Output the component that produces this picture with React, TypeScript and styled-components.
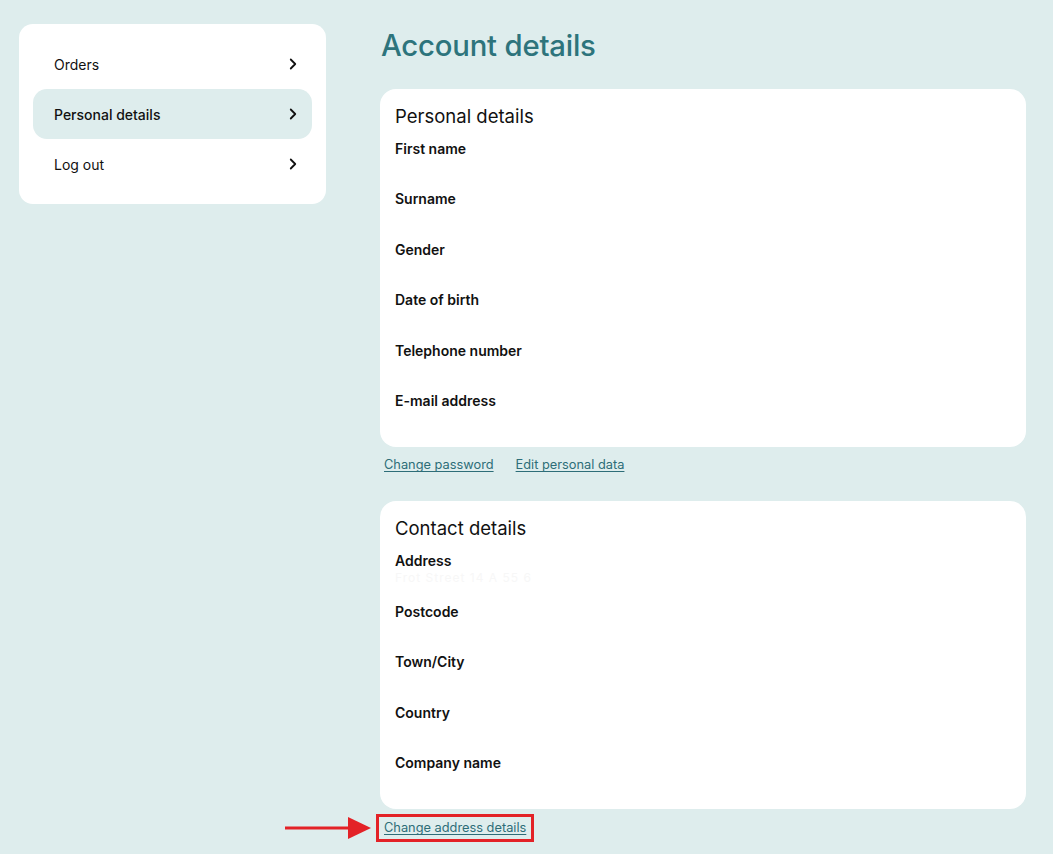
import React from "react";
import styled, { createGlobalStyle } from "styled-components";
import { ChevronRight } from "lucide-react";

const GlobalStyle = createGlobalStyle`
	body {
		margin: 0;
		background: #deeded;
		font-family: "Inter", "Noto Sans", sans-serif;
		color: #111;
	}
`;

const menu = [
	{ label: "Orders", active: false },
	{ label: "Personal details", active: true },
	{ label: "Log out", active: false },
];

const personalFields = ["First name", "Surname", "Gender", "Date of birth", "Telephone number", "E-mail address"];
const contactFields = [
	{ label: "Address", value: "Frot Street 14 A 55 6" },
	{ label: "Postcode", value: "" },
	{ label: "Town/City", value: "" },
	{ label: "Country", value: "" },
	{ label: "Company name", value: "" },
];

export default function App(): React.ReactElement {
	return (
		<>
			<GlobalStyle />
			<Page>
				<Sidebar>
					{menu.map((item) => (
						<MenuItem key={item.label} $active={item.active}>
							<span>{item.label}</span>
							<ChevronRight size={18} strokeWidth={2.4} />
						</MenuItem>
					))}
				</Sidebar>
				<Main>
					<Title>Account details</Title>
					<Card>
						<CardHeading>Personal details</CardHeading>
						{personalFields.map((f) => (
							<Field key={f}>
								<Label>{f}</Label>
								<Value />
							</Field>
						))}
					</Card>
					<Links>
						<Link href="#">Change password</Link>
						<Link href="#">Edit personal data</Link>
					</Links>
					<Card $top={27}>
						<CardHeading>Contact details</CardHeading>
						{contactFields.map((f) => (
							<Field key={f.label}>
								<Label>{f.label}</Label>
								<Value>{f.value}</Value>
							</Field>
						))}
					</Card>
					<Callout>
						<Arrow width="86" height="22" viewBox="0 0 86 22">
							<rect x="0" y="9.5" width="66" height="3" fill="#e32227" />
							<polygon points="63,0 86,11 63,22" fill="#e32227" />
						</Arrow>
						<Highlight>
							<Link href="#">Change address details</Link>
						</Highlight>
					</Callout>
				</Main>
			</Page>
		</>
	);
}

const Page = styled.div`
	display: grid;
	grid-template-columns: 307px 1fr;
	gap: 54px;
	padding: 24px 27px 0 19px;
	align-items: start;
`;

const Sidebar = styled.nav`
	background: #fff;
	border-radius: 14px;
	padding: 15px 14px;
`;

const MenuItem = styled.div<{ $active: boolean }>`
	display: flex;
	align-items: center;
	justify-content: space-between;
	height: 50px;
	padding: 0 10px 0 21px;
	border-radius: 14px;
	font-size: 14px;
	font-weight: ${(p) => (p.$active ? 500 : 400)};
	background: ${(p) => (p.$active ? "#deeded" : "transparent")};
	color: #111;
`;

const Main = styled.main`
	display: flex;
	flex-direction: column;
	align-items: stretch;
`;

const Title = styled.h1`
	margin: 0 0 21px 1px;
	font-size: 29.3px;
	line-height: 44px;
	font-weight: 500;
	color: #2d747c;
	letter-spacing: -0.2px;
`;

const Card = styled.section<{ $top?: number }>`
	background: #fff;
	border-radius: 16px;
	padding: 14px 15px 6px;
	margin-top: ${(p) => p.$top ?? 0}px;
`;

const CardHeading = styled.h2`
	margin: 0 0 10px;
	font-size: 18.5px;
	line-height: 26px;
	font-weight: 400;
	color: #111;
`;

const Field = styled.div`
	display: flex;
	flex-direction: column;
	height: 50.4px;
`;

const Label = styled.div`
	font-size: 14px;
	line-height: 20px;
	font-weight: 600;
	color: #111;
`;

const Value = styled.div`
	font-size: 12px;
	line-height: 14px;
	color: #f7f7f7;
	letter-spacing: 1px;
`;

const Links = styled.div`
	display: flex;
	gap: 22px;
	padding: 8px 4px 0;
	height: 19px;
`;

const Link = styled.a`
	font-size: 12.8px;
	line-height: 19px;
	color: #2d6d78;
	text-decoration: underline;
	text-underline-offset: 2px;
`;

const Callout = styled.div`
	position: relative;
	margin-top: 5px;
	align-self: flex-start;
`;

const Highlight = styled.div`
	display: flex;
	border: 3px solid #e32227;
	padding: 1px 5px 2px;
	margin-left: -4px;
`;

const Arrow = styled.svg`
	position: absolute;
	left: -95px;
	top: 3px;
`;
